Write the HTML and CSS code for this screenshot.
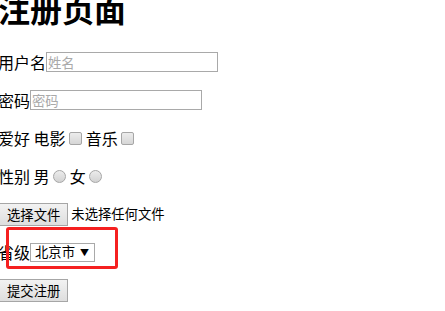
FILE: index.html
```html
<!DOCTYPE html>
<html lang="zh-CN">
<head>
    <meta charset="UTF-8">
    <title>注册页面</title>
    <link rel="stylesheet" href="styles.css">
</head>
<body>
    <div class="page">
        <h1>注册页面</h1>
        <form>
            <p>用户名<input type="text" class="field" placeholder="姓名"></p>
            <p>密码<input type="password" class="field" placeholder="密码"></p>
            <p>爱好 电影 <span class="check"></span> 音乐 <span class="check"></span></p>
            <p>性别 男 <span class="radio"></span> 女 <span class="radio"></span></p>
            <p class="small"><span class="btn">选择文件</span> 未选择任何文件</p>
            <p>省级<span class="select">北京市<span class="arrow">▼</span></span></p>
            <p class="small"><span class="btn">提交注册</span></p>
        </form>
    </div>
    <!-- annotation -->
    <div class="mark"></div>
</body>
</html>
```

FILE: styles.css
```css
/* Base */
body {
    margin: 0;
    font-family: "Noto Sans CJK SC", "Microsoft YaHei", sans-serif;
    font-size: 16px;
    color: #000;
    background: #fff;
    overflow: hidden;
}

.page {
    margin-left: -2px;
}

h1 {
    font-size: 32px;
    line-height: 32px;
    font-weight: bold;
    margin: -8px 0 27px;
}

p {
    margin: 16px 0;
    line-height: 22px;
    height: 22px;
    display: flex;
    align-items: center;
    white-space: pre;
}

/* Inputs */
.field {
    width: 168px;
    height: 16px;
    padding: 1px 1px;
    border: 1px solid #a9a9a9;
    font-family: inherit;
    font-size: 13.33px;
    outline: none;
}

.field::placeholder {
    color: #a9a9a9;
}

.check {
    display: inline-block;
    width: 11px;
    height: 11px;
    border: 1px solid #a6a6a6;
    border-radius: 2px;
    background: linear-gradient(#ececec, #d6d6d6);
}

.radio {
    display: inline-block;
    width: 11px;
    height: 11px;
    border: 1px solid #a6a6a6;
    border-radius: 50%;
    background: linear-gradient(#ececec, #d2d2d2);
}

.small {
    font-size: 13.33px;
}

.btn {
    display: inline-block;
    padding: 0 7px;
    height: 21px;
    line-height: 21px;
    border: 1px solid #a6a6a6;
    background: linear-gradient(#f2f2f2, #dedede);
    margin-left: 1px;
}

.select {
    display: inline-flex;
    align-items: center;
    width: 59px;
    height: 17px;
    padding-left: 4px;
    border: 1px solid #a9a9a9;
    font-size: 13.33px;
    position: relative;
}

.arrow {
    position: absolute;
    right: 5px;
    top: 1px;
    font-size: 9px;
    line-height: 15px;
}

/* red annotation box */
.mark {
    position: absolute;
    left: 6px;
    top: 227px;
    width: 106px;
    height: 36px;
    border: 3px solid #f52020;
    border-radius: 3px;
}
```
